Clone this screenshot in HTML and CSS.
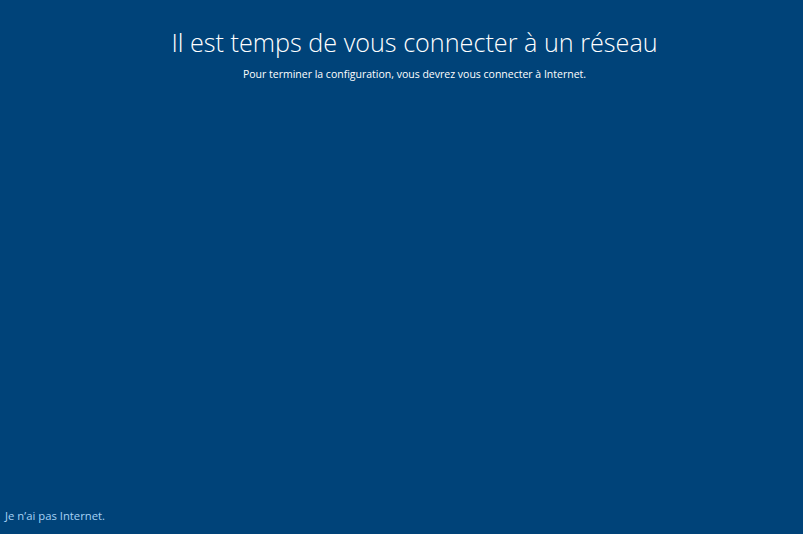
FILE: index.html
```html
<!DOCTYPE html>
<html lang="fr">
<head>
<meta charset="utf-8">
<link rel="stylesheet" href="styles.css">
</head>
<body>
<div class="screen">
  <header class="head">
    <h1 class="title">Il est temps de vous connecter à un réseau</h1>
    <p class="subtitle">Pour terminer la configuration, vous devrez vous connecter à Internet.</p>
  </header>
  <main class="content"></main>
  <footer class="foot">
    <a class="skip" href="#">Je n’ai pas Internet.</a>
  </footer>
</div>
</body>
</html>
```
FILE: styles.css
```css
html, body {
  margin: 0;
  padding: 0;
  height: 100%;
}
body {
  background: #004379;
  font-family: "Open Sans", "Noto Sans", sans-serif;
  color: #ffffff;
}
.screen {
  height: 100%;
  display: flex;
  flex-direction: column;
}
.head {
  display: flex;
  flex-direction: column;
  align-items: center;
  padding-top: 24px;
  padding-left: 26px;
}
.title {
  margin: 0;
  font-weight: 300;
  font-size: 25.2px;
  line-height: 36px;
  letter-spacing: 0;
}
.subtitle {
  margin: 7px 0 0 0;
  font-size: 10.5px;
  line-height: 14px;
}
.content {
  flex: 1;
}
.foot {
  padding: 0 0 9px 5px;
}
.skip {
  color: #a6d2f5;
  text-decoration: none;
  font-size: 11.3px;
  line-height: 14px;
}
```
